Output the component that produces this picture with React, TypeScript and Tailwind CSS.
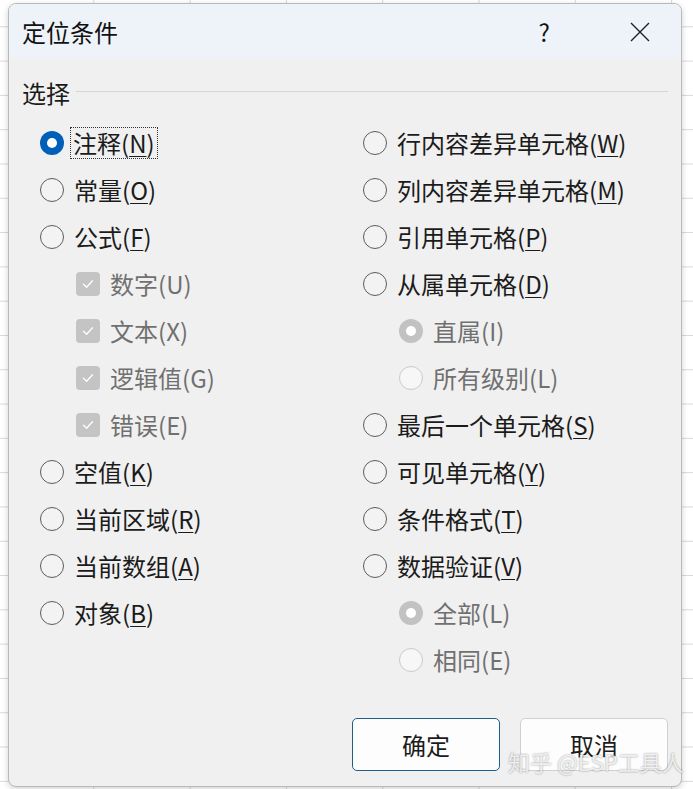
import React from "react";

type Item = {
  label: string;
  key?: string;
  kind: "radio" | "check";
  checked?: boolean;
  disabled?: boolean;
  indent?: boolean;
  focus?: boolean;
};

const leftItems: Item[] = [
  { label: "注释", key: "N", kind: "radio", checked: true, focus: true },
  { label: "常量", key: "O", kind: "radio" },
  { label: "公式", key: "F", kind: "radio" },
  { label: "数字", key: "U", kind: "check", checked: true, disabled: true, indent: true },
  { label: "文本", key: "X", kind: "check", checked: true, disabled: true, indent: true },
  { label: "逻辑值", key: "G", kind: "check", checked: true, disabled: true, indent: true },
  { label: "错误", key: "E", kind: "check", checked: true, disabled: true, indent: true },
  { label: "空值", key: "K", kind: "radio" },
  { label: "当前区域", key: "R", kind: "radio" },
  { label: "当前数组", key: "A", kind: "radio" },
  { label: "对象", key: "B", kind: "radio" },
];

const rightItems: Item[] = [
  { label: "行内容差异单元格", key: "W", kind: "radio" },
  { label: "列内容差异单元格", key: "M", kind: "radio" },
  { label: "引用单元格", key: "P", kind: "radio" },
  { label: "从属单元格", key: "D", kind: "radio" },
  { label: "直属", key: "I", kind: "radio", checked: true, disabled: true, indent: true },
  { label: "所有级别", key: "L", kind: "radio", disabled: true, indent: true },
  { label: "最后一个单元格", key: "S", kind: "radio" },
  { label: "可见单元格", key: "Y", kind: "radio" },
  { label: "条件格式", key: "T", kind: "radio" },
  { label: "数据验证", key: "V", kind: "radio" },
  { label: "全部", key: "L", kind: "radio", checked: true, disabled: true, indent: true },
  { label: "相同", key: "E", kind: "radio", disabled: true, indent: true },
];

function Radio({ checked, disabled }: { checked?: boolean; disabled?: boolean }) {
  if (checked) {
    return (
      <span
        className={`flex h-[24px] w-[24px] shrink-0 items-center justify-center rounded-full ${
          disabled ? "bg-[#c2c2c2]" : "bg-[#005fb8]"
        }`}
      >
        <span className="h-[10px] w-[10px] rounded-full bg-white" />
      </span>
    );
  }
  return (
    <span
      className={`h-[24px] w-[24px] shrink-0 rounded-full border-[1.5px] ${
        disabled ? "border-[#c9c9c9] bg-[#f7f7f7]" : "border-[#5c5c5c] bg-[#f3f3f3]"
      }`}
    />
  );
}

function Check() {
  return (
    <span className="flex h-[24px] w-[24px] shrink-0 items-center justify-center rounded-[4px] bg-[#c4c4c4]">
      <svg width="14" height="14" viewBox="0 0 14 14" fill="none">
        <path d="M2.5 7.2 L5.6 10.2 L11.5 3.8" stroke="white" strokeWidth="1.3" strokeLinecap="round" strokeLinejoin="round" />
      </svg>
    </span>
  );
}

function Row({ item }: { item: Item }) {
  const textColor = item.disabled ? "text-[#707070]" : "text-[#1b1b1b]";
  return (
    <div className={`flex h-[47px] items-center gap-[9px] ${item.indent ? "pl-[36px]" : ""}`}>
      {item.kind === "radio" ? (
        <Radio checked={item.checked} disabled={item.disabled} />
      ) : (
        <Check />
      )}
      <span
        className={`${textColor} whitespace-nowrap px-[1px] leading-[30px] ${
          item.focus ? "outline-1 outline-dotted outline-[#333] -ml-[2px] px-[2px]" : ""
        }`}
      >
        {item.label}(
        <span className={item.disabled ? "" : "underline decoration-1 underline-offset-[3px]"}>
          {item.key}
        </span>
        )
      </span>
    </div>
  );
}

export default function App() {
  return (
    <div
      className="relative h-[789px] w-[693px] overflow-hidden bg-white bg-[linear-gradient(to_right,#d8d8d8_1px,transparent_1px),linear-gradient(to_bottom,#d8d8d8_1px,transparent_1px)] bg-[size:96.3px_34.3px] bg-[position:-3px_-8px]"
      style={{ fontFamily: '"Noto Sans CJK SC", "Noto Sans", sans-serif' }}
    >
      <div className="ml-[8px] mt-[3px] flex h-[784px] w-[674px] flex-col overflow-hidden rounded-[8px] border border-[#b9b9b9] bg-[#f0f0f0] text-[24px] shadow-[0_2px_6px_rgba(0,0,0,0.18)]">
        {/* Title bar */}
        <div className="flex h-[55px] shrink-0 items-center bg-[#eef3f9] pl-[13px] pr-[30px]">
          <span className="text-[#111]">定位条件</span>
          <span className="ml-auto mr-[79px] text-[#111]">?</span>
          <svg width="22" height="22" viewBox="0 0 22 22">
            <path d="M2 2 L20 20 M20 2 L2 20" stroke="#222" strokeWidth="1.4" />
          </svg>
        </div>

        {/* Body */}
        <div className="flex flex-1 flex-col px-[13px]">
          <div className="mt-[18px] flex items-center gap-[6px]">
            <span className="leading-[32px] text-[#1b1b1b]">选择</span>
            <div className="mt-[-4px] h-px flex-1 bg-[#d6d6d6]" />
          </div>

          <div className="mt-[10px] grid grid-cols-[341px_1fr]">
            <div className="flex flex-col pl-[18px]">
              {leftItems.map((it, i) => (
                <Row key={i} item={it} />
              ))}
            </div>
            <div className="flex flex-col">
              {rightItems.map((it, i) => (
                <Row key={i} item={it} />
              ))}
            </div>
          </div>

          <div className="mt-auto mb-[15px] flex justify-end gap-[20px]">
            <button className="flex h-[53px] w-[148px] items-center justify-center rounded-[5px] border border-[#1f5f8f] bg-[#fdfdfd] text-[#1b1b1b]">
              确定
            </button>
            <button className="flex h-[53px] w-[148px] items-center justify-center rounded-[5px] border border-[#d0d0d0] bg-[#fdfdfd] text-[#1b1b1b]">
              取消
            </button>
          </div>
        </div>
      </div>

      {/* watermark */}
      <div className="absolute left-[508px] top-[746px] whitespace-nowrap text-[22px] leading-[30px] text-white/80 [text-shadow:0_0_2px_rgba(0,0,0,0.45)]">
        知乎 @ESP工具人
      </div>
    </div>
  );
}
